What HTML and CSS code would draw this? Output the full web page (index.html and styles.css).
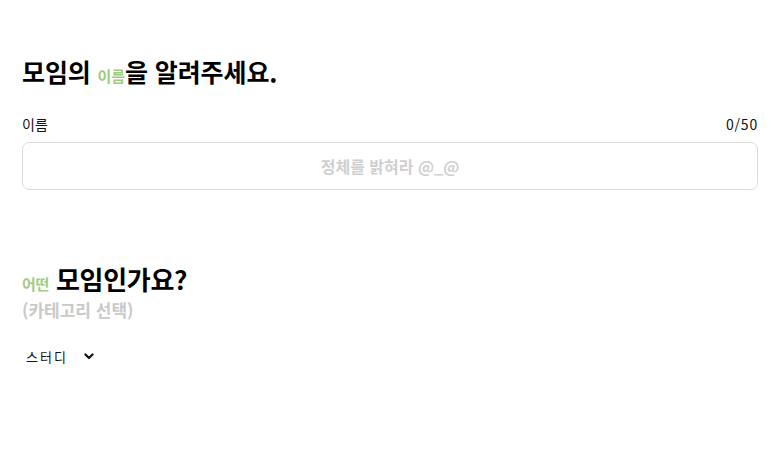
FILE: index.html
```html
<!DOCTYPE html>
<html lang="ko">
<head>
<meta charset="utf-8">
<link rel="stylesheet" href="styles.css">
</head>
<body>
<main class="page">
  <section class="block name-block">
    <h1 class="title">모임의 <span class="accent">이름</span>을 알려주세요.</h1>
    <div class="field-head">
      <span class="label">이름</span>
      <span class="count">0/50</span>
    </div>
    <input class="name-input" type="text" placeholder="정체를 밝혀라 @_@">
  </section>
  <section class="block cat-block">
    <h2 class="title title2"><span class="accent">어떤</span> 모임인가요?</h2>
    <p class="sub">(카테고리 선택)</p>
    <div class="select-wrap">
      <span class="select-text">스터디</span>
      <svg class="chev" width="10" height="7" viewBox="0 0 10 7"><path d="M1.5 1.5 L5 5 L8.5 1.5" fill="none" stroke="#111" stroke-width="2.2" stroke-linecap="round" stroke-linejoin="round"/></svg>
    </div>
  </section>
</main>
</body>
</html>
```

FILE: styles.css
```css
* { box-sizing: border-box; }
html, body { margin: 0; padding: 0; background: #fff; }
body {
  font-family: "Noto Sans CJK KR", "Noto Sans", sans-serif;
  color: #111;
}
.page {
  padding: 53px 13px 0 22px;
}
.block { display: flex; flex-direction: column; }
.title {
  margin: 0;
  font-size: 25px;
  font-weight: 700;
  line-height: 36px;
  letter-spacing: -0.1px;
  color: #000;
}
.accent {
  font-size: 15px;
  color: #9fcb82;
  font-weight: 700;
}
.field-head {
  display: flex;
  justify-content: space-between;
  align-items: center;
  margin-top: 19px;
  font-size: 14px;
  line-height: 22px;
}
.count { letter-spacing: 0.8px; }
.name-input {
  margin-top: 7px;
  width: 100%;
  height: 48px;
  border: 1px solid #dcdcdc;
  border-radius: 7px;
  text-align: center;
  font-family: inherit;
  font-size: 16px;
  font-weight: 700;
  outline: none;
}
.name-input::placeholder { color: #cfcfcf; }
.cat-block { margin-top: 71px; }
.title2 { font-size: 26px; line-height: 36px; letter-spacing: -0.3px; }
.sub {
  margin: -4px 0 0;
  font-size: 17px;
  font-weight: 700;
  color: #c9c9c9;
  line-height: 24px;
}
.select-wrap {
  display: flex;
  align-items: center;
  margin-top: 24px;
  padding-left: 4px;
  height: 20px;
}
.select-text {
  font-size: 13px;
  letter-spacing: 2px;
  width: 58px;
}
.chev { display: block; }
```
